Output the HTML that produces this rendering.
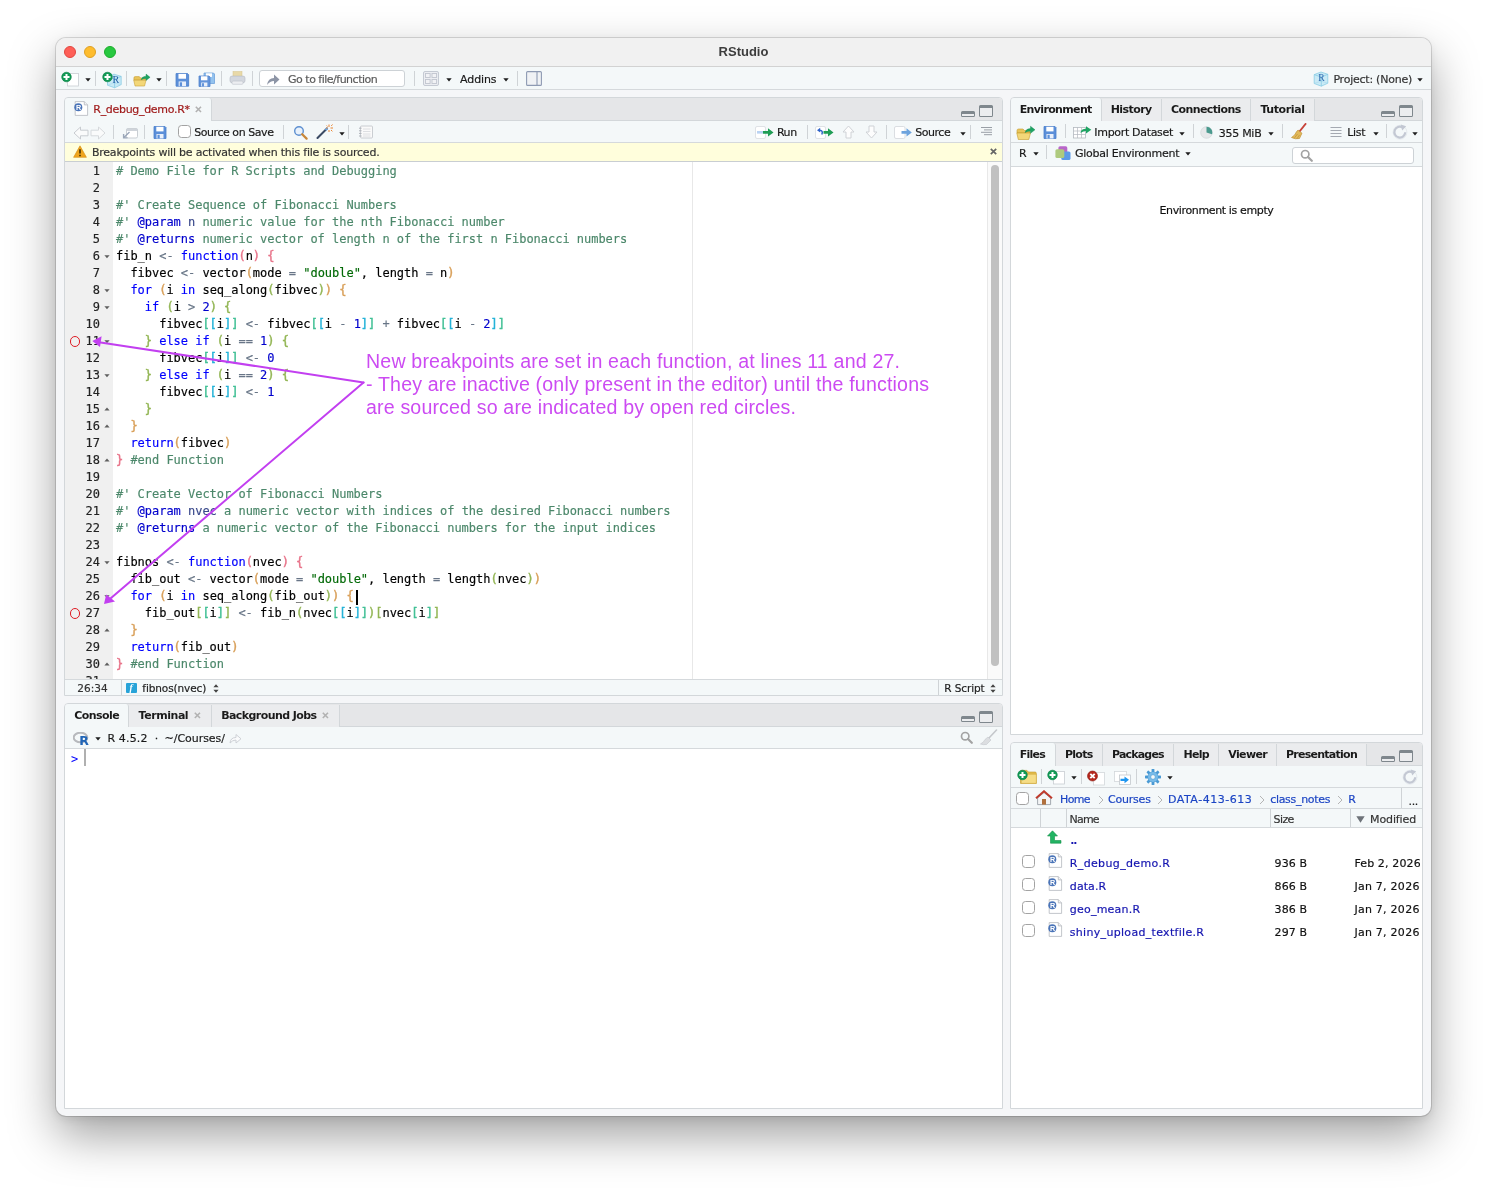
<!DOCTYPE html>
<html lang="en"><head><meta charset="utf-8"><title>RStudio</title>
<style>
html,body{margin:0;padding:0;background:#fff}
body{width:1487px;height:1190px;position:relative;overflow:hidden;font-family:"DejaVu Sans","Liberation Sans",sans-serif;font-size:11px;color:#000;line-height:1}
div,span,i,svg{position:absolute;box-sizing:border-box;white-space:pre}
i{display:block;font-style:normal}
#win{left:56px;top:38px;width:1375px;height:1078px;border-radius:10px;background:#f5f6f8;box-shadow:0 0 0 1px rgba(0,0,0,.13),0 20px 47px rgba(0,0,0,.37),0 3px 8px rgba(0,0,0,.08)}
#title{left:56px;top:38px;width:1375px;height:29px;background:#f1f1f1;border-radius:10px 10px 0 0;border-bottom:1px solid #d2d2d2}
#title .ttl{font-weight:700;left:0;width:1375px;text-align:center;top:7px;font-size:13px;color:#3d3d3d;font-family:"Liberation Sans",sans-serif}
.tl{top:8px;width:12px;height:12px;border-radius:50%}
#tbar{left:56px;top:67px;width:1375px;height:23px;background:#f4f8f9;border-bottom:1px solid #d5d9dc;overflow:hidden}
.pg{width:1487px;height:1190px}
#title,#tbar,.pane,body>svg{will-change:transform}
.pane{background:#fff;border:1px solid #d3d7da;border-radius:4px 4px 0 0;overflow:hidden}
.tabs{height:23px;background:#e5e6e8;border-bottom:1px solid #d3d7da}
.tab{height:22px;border-right:1px solid #d3d7da;background:#ebecee}
.tab.on{background:#f4f8f9;height:23px;border-radius:3px 3px 0 0}
.bar{height:22px;background:#f4f8f9;border-bottom:1px solid #d5d9dc}
.sep{width:1px;background:#cfd3d6}
.ln{left:0;height:17px;line-height:17px;font-family:"DejaVu Sans Mono","Liberation Mono",monospace;font-size:12px;letter-spacing:-0.0246px;color:#000}
.gn{left:0;width:48px;height:17px;line-height:17px;font-family:"DejaVu Sans Mono","Liberation Mono",monospace;font-size:12px;letter-spacing:-0.0246px;color:#222}
.gn span{right:13px;top:0}
.ln span{position:static}
.ln,.gn{-webkit-text-stroke:.16px}
.r{-webkit-text-stroke:.42px}
.c{color:#4c886b}.k{color:#0000ff}.s{color:#036a07}.n{color:#0000cd}.o{color:#687687}.t{color:#0000cd}.pv{color:#3b4a8c}
.bp{left:4.8px;top:3.3px;width:10.4px;height:10.4px;border:1.6px solid #df1c24;border-radius:50%}
.mm{width:14.2px;height:6.2px;border:1.2px solid #7f878d;border-top-width:3px;border-radius:1.5px;background:#ecedef}
.mx{width:14px;height:12px;border:1.3px solid #7f878d;border-top-width:3px;border-radius:1.5px;background:#ecedef}
.cb{width:13px;height:13px;border:1px solid #a3a3a3;border-radius:3.5px;background:#fff}
.x{color:#9b9b9b;font-weight:700;font-size:12px}
</style></head><body>
<div id="win"></div>
<div id="title"><i class="tl" style="left:8px;background:#fe5f57;border:.5px solid #e2463f"></i><i class="tl" style="left:28px;background:#febc2e;border:.5px solid #dfa023"></i><i class="tl" style="left:48px;background:#28c840;border:.5px solid #1dad2b"></i><span class="ttl">RStudio</span></div>
<div id="tbar"><div class="pg" style="left:-56px;top:-67px">
<svg style="left:61.4px;top:71.1px" width="18" height="16" viewBox="0 0 18 16"><rect x="6.5" y="2.5" width="11" height="12.5" fill="#fff" stroke="#c9cdd2" stroke-width=".8"/><circle cx="5.5" cy="6" r="4.8" fill="#119a55" stroke="#0c7f45" stroke-width=".6"/><path d="M2.5 6h6M5.5 3v6" stroke="#fff" stroke-width="2" fill="none"/></svg><svg style="left:85.4px;top:78px" width="6" height="4" viewBox="0 0 6 4"><path d="M.3 .2H5.7L3 3.4Z" fill="#1e1e1e"/></svg><i class="sep" style="left:95px;top:71px;height:15px"></i><svg style="left:101.5px;top:71px" width="20" height="18" viewBox="0 0 20 18"><path d="M5.5 5.8 L12 3.2 L19.2 5.4 V13.6 L12.6 16.8 L5.5 14.2Z" fill="#c9eaf6" stroke="#7fc8e3" stroke-width=".7"/><path d="M12 3.2V11.8L5.5 14.2M12 11.8L19.2 13.6" stroke="#a5d9ec" stroke-width=".6" fill="none"/><path d="M5.5 5.8L12.6 8.2L19.2 5.4M12.6 8.2V16.8" stroke="#7fc8e3" stroke-width=".7" fill="none"/><text x="10.4" y="12.2" font-family="Liberation Serif,serif" font-size="10" fill="#2461a8">R</text><circle cx="5.5" cy="6" r="4.8" fill="#119a55" stroke="#0c7f45" stroke-width=".6"/><path d="M2.5 6h6M5.5 3v6" stroke="#fff" stroke-width="2" fill="none"/></svg><i class="sep" style="left:125.8px;top:71px;height:15px"></i><svg style="left:132.6px;top:73px" width="18" height="14.4" viewBox="0 0 20 16"><path d="M1 5.5 Q1 4 2.5 4 H7 L8.5 5.5 H14 V8 H1Z" fill="#e9c55a" stroke="#c49b2e" stroke-width=".6"/><path d="M0.8 8 H14.5 L12.8 14.5 H2.3Z" fill="#f3d778" stroke="#c49b2e" stroke-width=".6"/><path d="M9 7.5 Q10 3.5 14.5 3.5 V1.2 L19 4.8 L14.5 8.3 V6 Q11.5 6 9 7.5Z" fill="#1ea463" stroke="#14874e" stroke-width=".4"/></svg><svg style="left:156.4px;top:78px" width="6" height="4" viewBox="0 0 6 4"><path d="M.3 .2H5.7L3 3.4Z" fill="#1e1e1e"/></svg><i class="sep" style="left:166px;top:71px;height:15px"></i><svg style="left:175.1px;top:71.6px" width="14.7" height="15.75" viewBox="0 0 14 15"><g opacity="1"><path d="M1 1.5 H12 L13 2.5 V13.5 H1Z" fill="#5b8fd9" stroke="#4a7fcc" stroke-width=".8"/><rect x="3.3" y="1.8" width="7.2" height="4.6" fill="#fff"/><rect x="3.5" y="9" width="7" height="4.5" fill="#e9f0fb"/><rect x="4.5" y="9.8" width="2.2" height="3.7" fill="#5b8fd9"/></g></svg><svg style="left:197.9px;top:71.5px" width="18" height="16" viewBox="0 0 18 16"><g opacity=".95"><path d="M6 1 H15.5 L16.5 2 V11.5 H6Z" fill="#8fc1ee" stroke="#5b95d6" stroke-width=".7"/><rect x="8" y="1.3" width="6" height="3.6" fill="#fff"/><path d="M1 4 H11 L12 5 V14.5 H1Z" fill="#5b8fd9" stroke="#4a7fcc" stroke-width=".8"/><rect x="3" y="4.3" width="6.4" height="4" fill="#fff"/><rect x="3.2" y="10.5" width="6.2" height="4" fill="#e9f0fb"/><rect x="4" y="11.2" width="2" height="3.3" fill="#5b8fd9"/></g></svg><i class="sep" style="left:221.1px;top:71px;height:15px"></i><svg style="left:229px;top:70.2px" width="17" height="16" viewBox="0 0 17 15"><rect x="4" y="1" width="9" height="6" fill="#e8d9a8" stroke="#d6c48c" stroke-width=".5"/><rect x="1" y="5.6" width="15" height="6.6" rx="2" fill="#d3d7de" stroke="#b3b8c2" stroke-width=".6"/><rect x="3" y="10.6" width="11" height="3.2" rx="1" fill="#eceef1" stroke="#b3b8c2" stroke-width=".5"/></svg><i class="sep" style="left:251.9px;top:71px;height:15px"></i><div style="left:259.4px;top:70.3px;width:146px;height:17px;background:#fff;border:1px solid #cdd2d6;border-radius:3px"></div><svg style="left:266px;top:72.5px" width="14" height="13" viewBox="0 0 14 13"><path d="M1 12 Q2 5 8 5 V1.5 L13.5 6.5 L8 11.5 V8 Q4 8 1 12Z" fill="#8d95a6"/></svg><span style="left:288.1px;top:74px;font-size:11px;-webkit-text-stroke:.18px;letter-spacing:-0.505px;color:#5a5a5a;">Go to file/function</span><i class="sep" style="left:414.2px;top:71px;height:15px"></i><svg style="left:423px;top:71.3px" width="16" height="15" viewBox="0 0 16 15"><g fill="#f1f2f5" stroke="#c0c5cf" stroke-width=".9"><rect x=".5" y=".5" width="15" height="14" rx="1.5" fill="#eceef2"/><rect x="2.5" y="2.5" width="4.6" height="4"/><rect x="9" y="2.5" width="4.6" height="4"/><rect x="2.5" y="8.5" width="4.6" height="4"/><rect x="9" y="8.5" width="4.6" height="4"/></g></svg><svg style="left:445.5px;top:78px" width="6" height="4" viewBox="0 0 6 4"><path d="M.3 .2H5.7L3 3.4Z" fill="#1e1e1e"/></svg><span style="left:460.1px;top:74px;font-size:11px;-webkit-text-stroke:.18px;letter-spacing:-0.127px;color:#1a1a1a;">Addins</span><svg style="left:503.4px;top:78px" width="6" height="4" viewBox="0 0 6 4"><path d="M.3 .2H5.7L3 3.4Z" fill="#1e1e1e"/></svg><i class="sep" style="left:517px;top:71px;height:15px"></i><svg style="left:525.8px;top:71.3px" width="16" height="15" viewBox="0 0 16 15"><rect x=".6" y=".6" width="14.8" height="13.8" rx="1" fill="#f0f2f5" stroke="#8e9ab3" stroke-width="1.1"/><path d="M11 1V14" stroke="#8e9ab3" stroke-width="1.1"/></svg><svg style="left:1312.8px;top:70.8px" width="16" height="16" viewBox="0 0 16 16"><path d="M1.2 3.6 L8 1 L14.8 3.3 V12.2 L8.3 15.2 L1.2 12.5Z" fill="#c9eaf6" stroke="#7fc8e3" stroke-width=".7"/><path d="M8 1V10.2L1.2 12.5M8 10.2L14.8 12.2" stroke="#a5d9ec" stroke-width=".6" fill="none"/><path d="M1.2 3.6L8.3 6L14.8 3.3M8.3 6V15.2" stroke="#7fc8e3" stroke-width=".7" fill="none"/><text x="5.2" y="10" font-family="Liberation Serif,serif" font-size="9.5" fill="#2b66ae">R</text></svg><span style="left:1333.4px;top:74px;font-size:11px;-webkit-text-stroke:.18px;letter-spacing:-0.235px;color:#333;">Project: (None)</span><svg style="left:1417px;top:78px" width="6" height="4" viewBox="0 0 6 4"><path d="M.3 .2H5.7L3 3.4Z" fill="#1e1e1e"/></svg>
</div></div>

<!-- SOURCE PANE -->
<div class="pane" style="left:64px;top:97px;width:939px;height:599px"><div class="pg" style="left:-65px;top:-98px">
 <div class="tabs" style="left:65px;top:98px;width:937px"></div>
 <div class="tab on" style="left:65px;top:98px;width:147px"></div>
<svg style="left:73px;top:100.4px" width="16" height="17" viewBox="0 0 16 17"><path d="M2.2 1.6 H11.3 L14.6 4.9 V15.4 H2.2Z" fill="#fff" stroke="#b4b8be" stroke-width=".8"/><path d="M11.3 1.6V4.9H14.6" fill="#f1f2f4" stroke="#b4b8be" stroke-width=".8"/><circle cx="5.3" cy="7.2" r="4" fill="#4a74b8"/><text x="3" y="9.8" font-family="Liberation Sans,sans-serif" font-weight="700" font-size="7.2" fill="#fff">R</text></svg><span style="left:93.3px;top:104px;font-size:11px;-webkit-text-stroke:.18px;letter-spacing:-0.306px;color:#a01b1b;">R_debug_demo.R*</span><svg style="left:194.5px;top:106px" width="7" height="7" viewBox="0 0 7 7"><path d="M.8 .8L6 6M6 .8L.8 6" stroke="#b2b2b2" stroke-width="1.6"/></svg><i class="mm" style="left:961px;top:110.6px"></i><i class="mx" style="left:979px;top:105px"></i>
 <div class="bar" style="left:65px;top:121px;width:937px"></div>
<svg style="left:73.2px;top:126px" width="16" height="14" viewBox="0 0 16 14"><path d="M1 7 L7.5 1 V4.2 H15 V9.8 H7.5 V13Z" fill="#fafbfb" stroke="#c8ccd0" stroke-width="1"/></svg><svg style="left:90.4px;top:126px" width="16" height="14" viewBox="0 0 16 14"><path d="M15 7 L8.5 1 V4.2 H1 V9.8 H8.5 V13Z" fill="#fafbfb" stroke="#d6d9dc" stroke-width="1"/></svg><i class="sep" style="left:113px;top:125px;height:14px"></i><svg style="left:121.6px;top:126px" width="16" height="13" viewBox="0 0 16 13"><rect x="4.5" y="2.5" width="11" height="9.5" rx="1.5" fill="#fff" stroke="#c3c8ce" stroke-width=".9"/><rect x="4.5" y="2.5" width="11" height="2.6" rx="1" fill="#cfd4da"/><path d="M7.5 6 L2 11.5 M1.6 8 V11.9 H5.5" stroke="#9aa6b8" stroke-width="1.4" fill="none"/></svg><i class="sep" style="left:143.9px;top:125px;height:14px"></i><svg style="left:153.2px;top:125.1px" width="14" height="15" viewBox="0 0 14 15"><g opacity="1"><path d="M1 1.5 H12 L13 2.5 V13.5 H1Z" fill="#5b8fd9" stroke="#4a7fcc" stroke-width=".8"/><rect x="3.3" y="1.8" width="7.2" height="4.6" fill="#fff"/><rect x="3.5" y="9" width="7" height="4.5" fill="#e9f0fb"/><rect x="4.5" y="9.8" width="2.2" height="3.7" fill="#5b8fd9"/></g></svg><i class="cb" style="left:178px;top:125.2px;width:12.6px;height:12.6px"></i><span style="left:194.2px;top:127px;font-size:11px;-webkit-text-stroke:.18px;letter-spacing:-0.442px;color:#1a1a1a;">Source on Save</span><i class="sep" style="left:283.1px;top:125px;height:14px"></i><svg style="left:293px;top:124.5px" width="15" height="15" viewBox="0 0 15 15"><circle cx="6" cy="6" r="4.3" fill="#e8f1fb" stroke="#5d8fd0" stroke-width="1.4"/><path d="M9.2 9.2 L13.6 13.6" stroke="#c9873a" stroke-width="2.2" stroke-linecap="round"/></svg><svg style="left:316.2px;top:124px" width="18" height="15" viewBox="0 0 18 15"><path d="M1.5 14 L11 4.5" stroke="#3b4a63" stroke-width="2" stroke-linecap="round"/><path d="M9.5 6 L11.5 4" stroke="#6aa7e8" stroke-width="2.2"/><g stroke="#e9822d" stroke-width="1"><path d="M13 0.5V3M13 6V8M10 4H11.5M14.5 4H17M15.2 1.8L16.6 .6M15 6L16.4 7.3M10.6 1.6L11.5 2.4"/></g></svg><svg style="left:338.5px;top:131.9px" width="6" height="4" viewBox="0 0 6 4"><path d="M.3 .2H5.7L3 3.4Z" fill="#1e1e1e"/></svg><i class="sep" style="left:348px;top:125px;height:14px"></i><svg style="left:357.8px;top:125px" width="15" height="14" viewBox="0 0 15 14"><rect x="2.5" y="1" width="12" height="12" rx="1" fill="#fafafa" stroke="#c4c8cd" stroke-width=".9"/><path d="M5 4H12.5M5 6.5H12.5M5 9H12.5M5 11H12.5" stroke="#d5d8dc" stroke-width=".8"/><path d="M1 3.2H3.6M1 5.8H3.6M1 8.4H3.6M1 11H3.6" stroke="#aeb3ba" stroke-width="1"/></svg><svg style="left:755.4px;top:125.5px" width="19" height="13" viewBox="0 0 19 13"><rect x=".5" y=".5" width="10" height="12" rx="1.5" fill="#fff" stroke="#d8dbdf" stroke-width=".8"/><rect x="2" y="5" width="6" height="2.6" fill="#b9d3f3"/><path d="M8 5 H13 V2.3 L18.5 6.4 L13 10.5 V7.8 H8Z" fill="#1f9d55"/></svg><span style="left:776.9px;top:127px;font-size:11px;-webkit-text-stroke:.18px;letter-spacing:-0.431px;color:#1a1a1a;">Run</span><i class="sep" style="left:807px;top:125px;height:14px"></i><svg style="left:815.4px;top:125.5px" width="19" height="13" viewBox="0 0 19 13"><rect x=".5" y=".5" width="10" height="12" rx="1.5" fill="#fff" stroke="#d8dbdf" stroke-width=".8"/><path d="M6.8 8.5 Q8.5 4.5 4.5 4.2" stroke="#2f63c9" stroke-width="1.5" fill="none"/><path d="M5.2 1.8 L2 4.2 L5.2 6.6Z" fill="#2f63c9"/><path d="M8.5 5 H13 V2.3 L18.5 6.4 L13 10.5 V7.8 H8.5Z" fill="#1f9d55"/></svg><svg style="left:841.5px;top:125px" width="13" height="14" viewBox="0 0 13 14"><path d="M6.5 1 L12 7 H9 V13 H4 V7 H1Z" fill="#fdfdfd" stroke="#cfd2d6" stroke-width="1"/></svg><svg style="left:865.3px;top:125px" width="13" height="14" viewBox="0 0 13 14"><path d="M6.5 13 L12 7 H9 V1 H4 V7 H1Z" fill="#fdfdfd" stroke="#cfd2d6" stroke-width="1"/></svg><i class="sep" style="left:885.9px;top:125px;height:14px"></i><svg style="left:894.3px;top:125.5px" width="18" height="13" viewBox="0 0 18 13"><rect x=".5" y=".5" width="10.5" height="12" rx="1.5" fill="#fff" stroke="#d3d6da" stroke-width=".8"/><path d="M7.5 5 H12.5 V2.3 L17.8 6.4 L12.5 10.5 V7.8 H7.5Z" fill="#6da3dd"/></svg><span style="left:915.2px;top:127px;font-size:11px;-webkit-text-stroke:.18px;letter-spacing:-0.447px;color:#1a1a1a;">Source</span><svg style="left:960.4px;top:131.9px" width="6" height="4" viewBox="0 0 6 4"><path d="M.3 .2H5.7L3 3.4Z" fill="#1e1e1e"/></svg><i class="sep" style="left:970.1px;top:125px;height:14px"></i><svg style="left:981px;top:126.8px" width="12" height="9" viewBox="0 0 12 9"><path d="M0 .5H11M3 2.9H11M0 5.3H11M3 7.7H11" stroke="#8f949c" stroke-width=".9"/></svg>
 <div style="left:65px;top:143px;width:937px;height:19px;background:#fffedc;border-bottom:1px solid #c9ced2"></div>
<svg style="left:73px;top:145px" width="14" height="13" viewBox="0 0 14 13"><path d="M7 .8 L13.4 12.3 H.6Z" fill="#f0a51d" stroke="#d18a0c" stroke-width=".6"/><path d="M7 4.2V8.6M7 9.8V11.2" stroke="#3a2a00" stroke-width="1.5"/></svg><span style="left:91.9px;top:147px;font-size:11px;-webkit-text-stroke:.18px;letter-spacing:-0.207px;color:#333;">Breakpoints will be activated when this file is sourced.</span><svg style="left:990.2px;top:148.4px" width="7" height="7" viewBox="0 0 7 7"><path d="M.8 .8L6.2 6.2M6.2 .8L.8 6.2" stroke="#666" stroke-width="1.7"/></svg>
 <div style="left:65px;top:162px;width:937px;height:517px;background:#fff;overflow:hidden">
  <div style="left:0;top:0;width:48px;height:517px;background:#f0f0f0"></div>
  <div style="left:627px;top:0;width:1px;height:517px;background:#e8e8e8"></div>
  <div style="left:0;top:0;width:48px;height:517px">
<div class="gn" style="top:1px"><span>1</span></div>
<div class="gn" style="top:18px"><span>2</span></div>
<div class="gn" style="top:35px"><span>3</span></div>
<div class="gn" style="top:52px"><span>4</span></div>
<div class="gn" style="top:69px"><span>5</span></div>
<div class="gn" style="top:86px"><span>6</span><svg style="left:39.2px;top:7px" width="6" height="4" viewBox="0 0 6 4"><path d="M.4 .3H5.6L3 3.3Z" fill="#5e5e5e"/></svg></div>
<div class="gn" style="top:103px"><span>7</span></div>
<div class="gn" style="top:120px"><span>8</span><svg style="left:39.2px;top:7px" width="6" height="4" viewBox="0 0 6 4"><path d="M.4 .3H5.6L3 3.3Z" fill="#5e5e5e"/></svg></div>
<div class="gn" style="top:137px"><span>9</span><svg style="left:39.2px;top:7px" width="6" height="4" viewBox="0 0 6 4"><path d="M.4 .3H5.6L3 3.3Z" fill="#5e5e5e"/></svg></div>
<div class="gn" style="top:154px"><span>10</span></div>
<div class="gn" style="top:171px"><i class="bp"></i><span>11</span><svg style="left:39.2px;top:7px" width="6" height="4" viewBox="0 0 6 4"><path d="M.4 .3H5.6L3 3.3Z" fill="#5e5e5e"/></svg></div>
<div class="gn" style="top:188px"><span>12</span></div>
<div class="gn" style="top:205px"><span>13</span><svg style="left:39.2px;top:7px" width="6" height="4" viewBox="0 0 6 4"><path d="M.4 .3H5.6L3 3.3Z" fill="#5e5e5e"/></svg></div>
<div class="gn" style="top:222px"><span>14</span></div>
<div class="gn" style="top:239px"><span>15</span><svg style="left:39.2px;top:6.2px" width="6" height="4" viewBox="0 0 6 4"><path d="M.4 3.5H5.6L3 .5Z" fill="#5e5e5e"/></svg></div>
<div class="gn" style="top:256px"><span>16</span><svg style="left:39.2px;top:6.2px" width="6" height="4" viewBox="0 0 6 4"><path d="M.4 3.5H5.6L3 .5Z" fill="#5e5e5e"/></svg></div>
<div class="gn" style="top:273px"><span>17</span></div>
<div class="gn" style="top:290px"><span>18</span><svg style="left:39.2px;top:6.2px" width="6" height="4" viewBox="0 0 6 4"><path d="M.4 3.5H5.6L3 .5Z" fill="#5e5e5e"/></svg></div>
<div class="gn" style="top:307px"><span>19</span></div>
<div class="gn" style="top:324px"><span>20</span></div>
<div class="gn" style="top:341px"><span>21</span></div>
<div class="gn" style="top:358px"><span>22</span></div>
<div class="gn" style="top:375px"><span>23</span></div>
<div class="gn" style="top:392px"><span>24</span><svg style="left:39.2px;top:7px" width="6" height="4" viewBox="0 0 6 4"><path d="M.4 .3H5.6L3 3.3Z" fill="#5e5e5e"/></svg></div>
<div class="gn" style="top:409px"><span>25</span></div>
<div class="gn" style="top:426px"><span>26</span><svg style="left:39.2px;top:7px" width="6" height="4" viewBox="0 0 6 4"><path d="M.4 .3H5.6L3 3.3Z" fill="#5e5e5e"/></svg></div>
<div class="gn" style="top:443px"><i class="bp"></i><span>27</span></div>
<div class="gn" style="top:460px"><span>28</span><svg style="left:39.2px;top:6.2px" width="6" height="4" viewBox="0 0 6 4"><path d="M.4 3.5H5.6L3 .5Z" fill="#5e5e5e"/></svg></div>
<div class="gn" style="top:477px"><span>29</span></div>
<div class="gn" style="top:494px"><span>30</span><svg style="left:39.2px;top:6.2px" width="6" height="4" viewBox="0 0 6 4"><path d="M.4 3.5H5.6L3 .5Z" fill="#5e5e5e"/></svg></div>
<div class="gn" style="top:511px"><span>31</span></div>

  </div>
  <div style="left:51px;top:0;width:880px;height:517px">
<div class="ln" style="top:1px"><span class="c"># Demo File for R Scripts and Debugging</span></div>
<div class="ln" style="top:18px"></div>
<div class="ln" style="top:35px"><span class="c">#&#x27; Create Sequence of Fibonacci Numbers</span></div>
<div class="ln" style="top:52px"><span class="c">#&#x27; </span><span class="t">@param</span><span class="pv"> n</span><span class="c"> numeric value for the nth Fibonacci number</span></div>
<div class="ln" style="top:69px"><span class="c">#&#x27; </span><span class="t">@returns</span><span class="c"> numeric vector of length n of the first n Fibonacci numbers</span></div>
<div class="ln" style="top:86px">fib_n <span class="o">&lt;-</span> <span class="k">function</span><span class="r" style="color:#e8748a">(</span>n<span class="r" style="color:#e8748a">)</span> <span class="r" style="color:#e8748a">{</span></div>
<div class="ln" style="top:103px">  fibvec <span class="o">&lt;-</span> vector<span class="r" style="color:#d9a05a">(</span>mode <span class="o">=</span> <span class="s">&quot;double&quot;</span>, length <span class="o">=</span> n<span class="r" style="color:#d9a05a">)</span></div>
<div class="ln" style="top:120px">  <span class="k">for</span> <span class="r" style="color:#d9a05a">(</span>i <span class="k">in</span> seq_along<span class="r" style="color:#93b655">(</span>fibvec<span class="r" style="color:#93b655">)</span><span class="r" style="color:#d9a05a">)</span> <span class="r" style="color:#d9a05a">{</span></div>
<div class="ln" style="top:137px">    <span class="k">if</span> <span class="r" style="color:#93b655">(</span>i <span class="o">&gt;</span> <span class="n">2</span><span class="r" style="color:#93b655">)</span> <span class="r" style="color:#93b655">{</span></div>
<div class="ln" style="top:154px">      fibvec<span class="r" style="color:#42c096">[</span><span class="r" style="color:#25b3d8">[</span>i<span class="r" style="color:#25b3d8">]</span><span class="r" style="color:#42c096">]</span> <span class="o">&lt;-</span> fibvec<span class="r" style="color:#42c096">[</span><span class="r" style="color:#25b3d8">[</span>i <span class="o">-</span> <span class="n">1</span><span class="r" style="color:#25b3d8">]</span><span class="r" style="color:#42c096">]</span> <span class="o">+</span> fibvec<span class="r" style="color:#42c096">[</span><span class="r" style="color:#25b3d8">[</span>i <span class="o">-</span> <span class="n">2</span><span class="r" style="color:#25b3d8">]</span><span class="r" style="color:#42c096">]</span></div>
<div class="ln" style="top:171px">    <span class="r" style="color:#93b655">}</span> <span class="k">else</span> <span class="k">if</span> <span class="r" style="color:#93b655">(</span>i <span class="o">==</span> <span class="n">1</span><span class="r" style="color:#93b655">)</span> <span class="r" style="color:#93b655">{</span></div>
<div class="ln" style="top:188px">      fibvec<span class="r" style="color:#42c096">[</span><span class="r" style="color:#25b3d8">[</span>i<span class="r" style="color:#25b3d8">]</span><span class="r" style="color:#42c096">]</span> <span class="o">&lt;-</span> <span class="n">0</span></div>
<div class="ln" style="top:205px">    <span class="r" style="color:#93b655">}</span> <span class="k">else</span> <span class="k">if</span> <span class="r" style="color:#93b655">(</span>i <span class="o">==</span> <span class="n">2</span><span class="r" style="color:#93b655">)</span> <span class="r" style="color:#93b655">{</span></div>
<div class="ln" style="top:222px">      fibvec<span class="r" style="color:#42c096">[</span><span class="r" style="color:#25b3d8">[</span>i<span class="r" style="color:#25b3d8">]</span><span class="r" style="color:#42c096">]</span> <span class="o">&lt;-</span> <span class="n">1</span></div>
<div class="ln" style="top:239px">    <span class="r" style="color:#93b655">}</span></div>
<div class="ln" style="top:256px">  <span class="r" style="color:#d9a05a">}</span></div>
<div class="ln" style="top:273px">  <span class="k">return</span><span class="r" style="color:#d9a05a">(</span>fibvec<span class="r" style="color:#d9a05a">)</span></div>
<div class="ln" style="top:290px"><span class="r" style="color:#e8748a">}</span> <span class="c">#end Function</span></div>
<div class="ln" style="top:307px"></div>
<div class="ln" style="top:324px"><span class="c">#&#x27; Create Vector of Fibonacci Numbers</span></div>
<div class="ln" style="top:341px"><span class="c">#&#x27; </span><span class="t">@param</span><span class="pv"> nvec</span><span class="c"> a numeric vector with indices of the desired Fibonacci numbers</span></div>
<div class="ln" style="top:358px"><span class="c">#&#x27; </span><span class="t">@returns</span><span class="c"> a numeric vector of the Fibonacci numbers for the input indices</span></div>
<div class="ln" style="top:375px"></div>
<div class="ln" style="top:392px">fibnos <span class="o">&lt;-</span> <span class="k">function</span><span class="r" style="color:#e8748a">(</span>nvec<span class="r" style="color:#e8748a">)</span> <span class="r" style="color:#e8748a">{</span></div>
<div class="ln" style="top:409px">  fib_out <span class="o">&lt;-</span> vector<span class="r" style="color:#d9a05a">(</span>mode <span class="o">=</span> <span class="s">&quot;double&quot;</span>, length <span class="o">=</span> length<span class="r" style="color:#93b655">(</span>nvec<span class="r" style="color:#93b655">)</span><span class="r" style="color:#d9a05a">)</span></div>
<div class="ln" style="top:426px">  <span class="k">for</span> <span class="r" style="color:#d9a05a">(</span>i <span class="k">in</span> seq_along<span class="r" style="color:#93b655">(</span>fib_out<span class="r" style="color:#93b655">)</span><span class="r" style="color:#d9a05a">)</span> <span class="r" style="color:#d9a05a">{</span></div>
<div class="ln" style="top:443px">    fib_out<span class="r" style="color:#93b655">[</span><span class="r" style="color:#42c096">[</span>i<span class="r" style="color:#42c096">]</span><span class="r" style="color:#93b655">]</span> <span class="o">&lt;-</span> fib_n<span class="r" style="color:#93b655">(</span>nvec<span class="r" style="color:#42c096">[</span><span class="r" style="color:#25b3d8">[</span>i<span class="r" style="color:#25b3d8">]</span><span class="r" style="color:#42c096">]</span><span class="r" style="color:#93b655">)</span><span class="r" style="color:#93b655">[</span>nvec<span class="r" style="color:#42c096">[</span>i<span class="r" style="color:#42c096">]</span><span class="r" style="color:#93b655">]</span></div>
<div class="ln" style="top:460px">  <span class="r" style="color:#d9a05a">}</span></div>
<div class="ln" style="top:477px">  <span class="k">return</span><span class="r" style="color:#d9a05a">(</span>fib_out<span class="r" style="color:#d9a05a">)</span></div>
<div class="ln" style="top:494px"><span class="r" style="color:#e8748a">}</span> <span class="c">#end Function</span></div>
<div class="ln" style="top:511px"></div>

  </div>
  <div style="left:290.5px;top:427.5px;width:2px;height:15px;background:#000"></div>
  <div style="left:922px;top:0;width:15px;height:517px;background:#fafafa;border-left:1px solid #e8e8e8"></div>
  <div style="left:926px;top:3px;width:8px;height:501px;border-radius:4px;background:#c1c1c1"></div>
 </div>
 <div style="left:65px;top:679px;width:937px;height:16px;background:#f4f8f9;border-top:1px solid #d5d9dc"></div>
<span style="left:77.2px;top:683px;font-size:10.5px;-webkit-text-stroke:.18px;letter-spacing:0.067px;color:#333;">26:34</span><i class="sep" style="left:120.9px;top:680px;height:15px"></i><svg style="left:126.3px;top:683.2px" width="11" height="10" viewBox="0 0 11 10"><rect width="11" height="10" rx="1" fill="#27a3d8"/><text x="3.4" y="8" font-family="Liberation Serif,serif" font-style="italic" font-weight="700" font-size="9.5" fill="#fff">f</text></svg><span style="left:142.3px;top:683px;font-size:10.5px;-webkit-text-stroke:.18px;letter-spacing:-0.094px;color:#222;">fibnos(nvec)</span><svg style="left:213px;top:684.3px" width="6" height="9" viewBox="0 0 6 9"><path d="M3 0.3 L5.6 3.3 H.4Z M3 8.7 L5.6 5.7 H.4Z" fill="#444"/></svg><i class="sep" style="left:937.7px;top:680px;height:15px"></i><span style="left:944.3px;top:683px;font-size:10.5px;-webkit-text-stroke:.18px;letter-spacing:-0.099px;color:#222;">R Script</span><svg style="left:990.3px;top:684.3px" width="6" height="9" viewBox="0 0 6 9"><path d="M3 0.3 L5.6 3.3 H.4Z M3 8.7 L5.6 5.7 H.4Z" fill="#444"/></svg>
</div></div>

<!-- CONSOLE PANE -->
<div class="pane" style="left:64px;top:703px;width:939px;height:406px"><div class="pg" style="left:-65px;top:-704px">
 <div class="tabs" style="left:65px;top:704px;width:937px"></div>
<div class="tab on" style="left:65px;top:704px;width:64px"></div><div class="tab" style="left:129px;top:705px;width:83px"></div><div class="tab" style="left:212px;top:705px;width:128px"></div><span style="left:74.2px;top:710px;font-size:11px;font-weight:700;letter-spacing:-0.542px;color:#1a1a1a;">Console</span><span style="left:138.6px;top:710px;font-size:11px;font-weight:700;letter-spacing:-0.448px;color:#1a1a1a;">Terminal</span><svg style="left:194.3px;top:711.6px" width="7" height="7" viewBox="0 0 7 7"><path d="M.8 .8L6 6M6 .8L.8 6" stroke="#b2b2b2" stroke-width="1.6"/></svg><span style="left:221.2px;top:710px;font-size:11px;font-weight:700;letter-spacing:-0.569px;color:#1a1a1a;">Background Jobs</span><svg style="left:322.2px;top:711.6px" width="7" height="7" viewBox="0 0 7 7"><path d="M.8 .8L6 6M6 .8L.8 6" stroke="#b2b2b2" stroke-width="1.6"/></svg><i class="mm" style="left:961px;top:716.2px"></i><i class="mx" style="left:979px;top:710.6px"></i>
 <div class="bar" style="left:65px;top:727px;width:937px"></div>
<svg style="left:73px;top:731.5px" width="17" height="13" viewBox="0 0 17 13"><ellipse cx="7.5" cy="5.5" rx="6.8" ry="4.8" fill="none" stroke="#b7b9bd" stroke-width="2"/><text x="6.3" y="12.8" font-family="DejaVu Sans,sans-serif" font-weight="700" font-size="12.5" fill="#2165b6">R</text></svg><svg style="left:95.1px;top:737px" width="6" height="4" viewBox="0 0 6 4"><path d="M.3 .2H5.7L3 3.4Z" fill="#1e1e1e"/></svg><span style="left:107.4px;top:733px;font-size:11px;-webkit-text-stroke:.18px;letter-spacing:0.166px;color:#1a1a1a;">R 4.5.2</span><span style="left:154.8px;top:733px;font-size:11px;-webkit-text-stroke:.18px;color:#1a1a1a;">·</span><span style="left:164.6px;top:733px;font-size:11px;-webkit-text-stroke:.18px;letter-spacing:-0.047px;color:#1a1a1a;">~/Courses/</span><svg style="left:229px;top:732.5px" width="13" height="11" viewBox="0 0 13 11"><path d="M1 10 Q1.5 4.5 7 4.5 V1.5 L12 5.8 L7 10 V7 Q3.5 7 1 10Z" fill="#fafbfc" stroke="#c9cdd3" stroke-width=".9"/></svg><svg style="left:960px;top:731px" width="13" height="13" viewBox="0 0 13 13"><circle cx="5.2" cy="5.2" r="3.7" fill="none" stroke="#a3a3a3" stroke-width="1.7"/><path d="M8 8 L11.8 11.8" stroke="#a3a3a3" stroke-width="2.2" stroke-linecap="round"/></svg><svg style="left:978.5px;top:729px" width="19" height="17" viewBox="0 0 19 17"><path d="M17.5 1 L9.5 9.5" stroke="#c5c8cc" stroke-width="1.6" stroke-linecap="round"/><path d="M9 8 L12 11 L7.5 15.5 Q4 16 1.5 15 Q5 13 6 10.5Z" fill="#dcdee1" stroke="#c5c8cc" stroke-width=".6"/></svg><span style="left:71px;top:752px;font-family:'DejaVu Sans Mono','Liberation Mono',monospace;font-size:12px;line-height:14px;color:#0000ff">&gt;</span><div style="left:84.3px;top:749px;width:1.7px;height:17px;background:#b0b0b0"></div>
</div></div>

<!-- ENV PANE -->
<div class="pane" style="left:1010px;top:97px;width:413px;height:638px"><div class="pg" style="left:-1011px;top:-98px">
 <div class="tabs" style="left:1011px;top:98px;width:411px"></div>
<div class="tab on" style="left:1011px;top:98px;width:91px"></div><div class="tab" style="left:1102px;top:99px;width:60px"></div><div class="tab" style="left:1162px;top:99px;width:89px"></div><div class="tab" style="left:1251px;top:99px;width:64px"></div><span style="left:1019.7px;top:104px;font-size:11px;font-weight:700;letter-spacing:-0.648px;color:#1a1a1a;">Environment</span><span style="left:1110.7px;top:104px;font-size:11px;font-weight:700;letter-spacing:-0.562px;color:#1a1a1a;">History</span><span style="left:1171px;top:104px;font-size:11px;font-weight:700;letter-spacing:-0.595px;color:#1a1a1a;">Connections</span><span style="left:1260.4px;top:104px;font-size:11px;font-weight:700;letter-spacing:-0.393px;color:#1a1a1a;">Tutorial</span><i class="mm" style="left:1381px;top:110.6px"></i><i class="mx" style="left:1399px;top:105px"></i>
 <div class="bar" style="left:1011px;top:121px;width:411px"></div>
 <div class="bar" style="left:1011px;top:143px;width:411px;height:24px"></div>
<svg style="left:1016.4px;top:125px" width="20" height="16" viewBox="0 0 20 16"><path d="M1 5.5 Q1 4 2.5 4 H7 L8.5 5.5 H14 V8 H1Z" fill="#e9c55a" stroke="#c49b2e" stroke-width=".6"/><path d="M0.8 8 H14.5 L12.8 14.5 H2.3Z" fill="#f3d778" stroke="#c49b2e" stroke-width=".6"/><path d="M9 7.5 Q10 3.5 14.5 3.5 V1.2 L19 4.8 L14.5 8.3 V6 Q11.5 6 9 7.5Z" fill="#1ea463" stroke="#14874e" stroke-width=".4"/></svg><svg style="left:1043.2px;top:124.8px" width="14" height="15" viewBox="0 0 14 15"><g opacity="1"><path d="M1 1.5 H12 L13 2.5 V13.5 H1Z" fill="#5b8fd9" stroke="#4a7fcc" stroke-width=".8"/><rect x="3.3" y="1.8" width="7.2" height="4.6" fill="#fff"/><rect x="3.5" y="9" width="7" height="4.5" fill="#e9f0fb"/><rect x="4.5" y="9.8" width="2.2" height="3.7" fill="#5b8fd9"/></g></svg><i class="sep" style="left:1065.1px;top:124px;height:14px"></i><svg style="left:1072.7px;top:124.5px" width="19" height="14" viewBox="0 0 19 14"><rect x=".5" y="2.5" width="12" height="10.5" fill="#fff" stroke="#b3b8bf" stroke-width=".8"/><path d="M.5 6H12.5M.5 9.5H12.5M4.5 2.5V13M8.5 2.5V13" stroke="#b3b8bf" stroke-width=".7"/><path d="M7.5 8 Q8 3.8 13 3.8 V1.2 L18.3 4.8 L13 8.4 V6 Q10 6 7.5 8Z" fill="#1ea463"/></svg><span style="left:1094.3px;top:127px;font-size:11px;-webkit-text-stroke:.18px;letter-spacing:-0.314px;color:#1a1a1a;">Import Dataset</span><svg style="left:1179.4px;top:131.9px" width="6" height="4" viewBox="0 0 6 4"><path d="M.3 .2H5.7L3 3.4Z" fill="#1e1e1e"/></svg><i class="sep" style="left:1193.4px;top:124px;height:14px"></i><svg style="left:1200.3px;top:125.5px" width="13" height="13" viewBox="0 0 13 13"><circle cx="6.5" cy="6.5" r="5.8" fill="#e6e8ea" stroke="#cfd2d5" stroke-width=".6"/><path d="M6.5 6.5 L6.5 .7 A5.8 5.8 0 0 1 12 8.2Z" fill="#4a9a8e"/></svg><span style="left:1218.8px;top:128px;font-size:11px;-webkit-text-stroke:.18px;letter-spacing:-0.285px;color:#1a1a1a;">355 MiB</span><svg style="left:1268.2px;top:131.9px" width="6" height="4" viewBox="0 0 6 4"><path d="M.3 .2H5.7L3 3.4Z" fill="#1e1e1e"/></svg><i class="sep" style="left:1281.8px;top:124px;height:14px"></i><svg style="left:1289.5px;top:123px" width="17" height="17" viewBox="0 0 17 17"><path d="M15.5 1 L9.5 8.5" stroke="#c7443a" stroke-width="2" stroke-linecap="round"/><path d="M8 7 L12 10.2 L9.5 15.5 Q5 16.5 1.5 14.5 Q5.5 12 6.3 9Z" fill="#e2b95b" stroke="#b98b2d" stroke-width=".6"/><path d="M4.5 14.8L7.5 11M7 15.6L9.5 12" stroke="#b98b2d" stroke-width=".6"/></svg><svg style="left:1329.5px;top:127px" width="12" height="11" viewBox="0 0 12 11"><path d="M.5 .5H11.5M.5 3.5H11.5M.5 6.5H11.5M.5 9.5H11.5" stroke="#a4a9b1" stroke-width="1"/></svg><span style="left:1347.2px;top:127px;font-size:11px;-webkit-text-stroke:.18px;letter-spacing:-0.309px;color:#1a1a1a;">List</span><svg style="left:1372.7px;top:131.9px" width="6" height="4" viewBox="0 0 6 4"><path d="M.3 .2H5.7L3 3.4Z" fill="#1e1e1e"/></svg><i class="sep" style="left:1386px;top:124px;height:14px"></i><svg style="left:1392px;top:124px" width="16" height="16" viewBox="0 0 16 16"><path d="M13.2 8.2 A5.4 5.4 0 1 1 10.6 3.5" fill="none" stroke="#c3c8d3" stroke-width="2.2"/><path d="M8.8 0.6 L14.2 2.2 L10.2 6.4Z" fill="#c3c8d3"/><circle cx="8" cy="8.2" r="6.9" fill="none" stroke="#c3c8d3" stroke-width=".5" opacity=".6"/></svg><svg style="left:1412.3px;top:131.9px" width="6" height="4" viewBox="0 0 6 4"><path d="M.3 .2H5.7L3 3.4Z" fill="#1e1e1e"/></svg><span style="left:1019px;top:148px;font-size:11px;-webkit-text-stroke:.18px;letter-spacing:-0.156px;color:#1a1a1a;">R</span><svg style="left:1032.5px;top:152.1px" width="6" height="4" viewBox="0 0 6 4"><path d="M.3 .2H5.7L3 3.4Z" fill="#1e1e1e"/></svg><i class="sep" style="left:1045.9px;top:145px;height:14px"></i><svg style="left:1054.6px;top:145.8px" width="16" height="15" viewBox="0 0 16 15"><rect x="3.4" y=".3" width="8.9" height="8.6" rx="1.6" fill="#b866c9"/><rect x="6.3" y="5.4" width="9.2" height="8.6" rx="1.6" fill="#5b9ae8"/><rect x=".4" y="3.2" width="8.9" height="8.9" rx="1.6" fill="#aeca7e"/></svg><span style="left:1074.9px;top:148px;font-size:11px;-webkit-text-stroke:.18px;letter-spacing:-0.240px;color:#1a1a1a;">Global Environment</span><svg style="left:1185.3px;top:152.1px" width="6" height="4" viewBox="0 0 6 4"><path d="M.3 .2H5.7L3 3.4Z" fill="#1e1e1e"/></svg><div style="left:1292.3px;top:146.5px;width:121.5px;height:17px;background:#fff;border:1px solid #cdd2d6;border-radius:3px"></div><svg style="left:1299.5px;top:149px" width="13" height="13" viewBox="0 0 13 13"><circle cx="5.2" cy="5.2" r="3.7" fill="none" stroke="#a3a3a3" stroke-width="1.7"/><path d="M8 8 L11.8 11.8" stroke="#a3a3a3" stroke-width="2.2" stroke-linecap="round"/></svg><span style="left:1159.5px;top:205px;font-size:11px;-webkit-text-stroke:.18px;letter-spacing:-0.366px;color:#111;">Environment is empty</span>
</div></div>

<!-- FILES PANE -->
<div class="pane" style="left:1010px;top:742px;width:413px;height:367px"><div class="pg" style="left:-1011px;top:-743px">
 <div class="tabs" style="left:1011px;top:743px;width:411px"></div>
<div class="tab on" style="left:1011px;top:743px;width:45px"></div><div class="tab" style="left:1056px;top:744px;width:47px"></div><div class="tab" style="left:1103px;top:744px;width:71px"></div><div class="tab" style="left:1174px;top:744px;width:45px"></div><div class="tab" style="left:1219px;top:744px;width:58px"></div><div class="tab" style="left:1277px;top:744px;width:90px"></div><span style="left:1019.7px;top:749px;font-size:11px;font-weight:700;letter-spacing:-0.716px;color:#1a1a1a;">Files</span><span style="left:1064.9px;top:749px;font-size:11px;font-weight:700;letter-spacing:-0.681px;color:#1a1a1a;">Plots</span><span style="left:1112px;top:749px;font-size:11px;font-weight:700;letter-spacing:-0.818px;color:#1a1a1a;">Packages</span><span style="left:1183.4px;top:749px;font-size:11px;font-weight:700;letter-spacing:-0.678px;color:#1a1a1a;">Help</span><span style="left:1228.3px;top:749px;font-size:11px;font-weight:700;letter-spacing:-0.652px;color:#1a1a1a;">Viewer</span><span style="left:1286px;top:749px;font-size:11px;font-weight:700;letter-spacing:-0.741px;color:#1a1a1a;">Presentation</span><i class="mm" style="left:1381px;top:755.8px"></i><i class="mx" style="left:1399px;top:750px"></i>
 <div class="bar" style="left:1011px;top:766px;width:411px"></div>
 <div class="bar" style="left:1011px;top:788px;width:411px;height:21px"></div>
 <div class="bar" style="left:1011px;top:809px;width:411px;height:19px"></div>
<svg style="left:1016.5px;top:769px" width="20" height="16" viewBox="0 0 20 16"><path d="M3.5 2.6 Q3.5 1.4 4.7 1.4 H10 L11.4 3 H18 Q19.3 3 19.3 4.2 V14.4 H3.5Z" fill="#e3bb4a" stroke="#c49b2e" stroke-width=".6"/><path d="M4.2 5.2 H19.3 V14.4 H4.2Z" fill="#f5dc85" stroke="#c9a135" stroke-width=".5"/><circle cx="5.5" cy="6" r="4.8" fill="#119a55" stroke="#0c7f45" stroke-width=".6"/><path d="M2.5 6h6M5.5 3v6" stroke="#fff" stroke-width="2" fill="none"/></svg><i class="sep" style="left:1041.1px;top:769px;height:15px"></i><svg style="left:1047.4px;top:768.8px" width="18" height="16" viewBox="0 0 18 16"><rect x="6.5" y="2.5" width="11" height="12.5" fill="#fff" stroke="#c9cdd2" stroke-width=".8"/><circle cx="5.5" cy="6" r="4.8" fill="#119a55" stroke="#0c7f45" stroke-width=".6"/><path d="M2.5 6h6M5.5 3v6" stroke="#fff" stroke-width="2" fill="none"/></svg><svg style="left:1071.3px;top:776.1px" width="6" height="4" viewBox="0 0 6 4"><path d="M.3 .2H5.7L3 3.4Z" fill="#1e1e1e"/></svg><i class="sep" style="left:1081.4px;top:769px;height:15px"></i><svg style="left:1087px;top:769.5px" width="18" height="16" viewBox="0 0 18 16"><rect x="6.5" y="2.5" width="11" height="12.5" fill="#fff" stroke="#d3d6da" stroke-width=".8"/><circle cx="5.5" cy="6" r="5" fill="#b5271d" stroke="#8f1b13" stroke-width=".6"/><path d="M3.3 3.8L7.7 8.2M7.7 3.8L3.3 8.2" stroke="#fff" stroke-width="1.9"/></svg><svg style="left:1113.5px;top:771px" width="17" height="14" viewBox="0 0 17 14"><rect x=".5" y=".5" width="12" height="10" fill="#fff" stroke="#d3d6da" stroke-width=".8"/><rect x="5.5" y="4" width="11" height="9.5" fill="#fff" stroke="#c3c7cc" stroke-width=".8"/><path d="M6.5 7.7 H10.5 V5.4 L15 8.8 L10.5 12.2 V9.9 H6.5Z" fill="#1e96f0"/></svg><i class="sep" style="left:1136.4px;top:769px;height:15px"></i><svg style="left:1145px;top:768.5px" width="16" height="16" viewBox="0 0 16 16"><rect x="6.6" y="0" width="2.8" height="4" rx=".6" fill="#4a9ad4" transform="rotate(0 8 8)"/><rect x="6.6" y="0" width="2.8" height="4" rx=".6" fill="#4a9ad4" transform="rotate(45 8 8)"/><rect x="6.6" y="0" width="2.8" height="4" rx=".6" fill="#4a9ad4" transform="rotate(90 8 8)"/><rect x="6.6" y="0" width="2.8" height="4" rx=".6" fill="#4a9ad4" transform="rotate(135 8 8)"/><rect x="6.6" y="0" width="2.8" height="4" rx=".6" fill="#4a9ad4" transform="rotate(180 8 8)"/><rect x="6.6" y="0" width="2.8" height="4" rx=".6" fill="#4a9ad4" transform="rotate(225 8 8)"/><rect x="6.6" y="0" width="2.8" height="4" rx=".6" fill="#4a9ad4" transform="rotate(270 8 8)"/><rect x="6.6" y="0" width="2.8" height="4" rx=".6" fill="#4a9ad4" transform="rotate(315 8 8)"/><circle cx="8" cy="8" r="5.4" fill="#4a9ad4"/><circle cx="8" cy="8" r="5" fill="#79bbe8"/><circle cx="8" cy="8" r="2.3" fill="#f4f8f9" stroke="#4a9ad4" stroke-width=".6"/></svg><svg style="left:1167.3px;top:776.1px" width="6" height="4" viewBox="0 0 6 4"><path d="M.3 .2H5.7L3 3.4Z" fill="#1e1e1e"/></svg><svg style="left:1402px;top:768.5px" width="16" height="16" viewBox="0 0 16 16"><path d="M13.2 8.2 A5.4 5.4 0 1 1 10.6 3.5" fill="none" stroke="#c3c8d3" stroke-width="2.2"/><path d="M8.8 0.6 L14.2 2.2 L10.2 6.4Z" fill="#c3c8d3"/><circle cx="8" cy="8.2" r="6.9" fill="none" stroke="#c3c8d3" stroke-width=".5" opacity=".6"/></svg><i class="cb" style="left:1015.7px;top:792.2px"></i><svg style="left:1035px;top:789.7px" width="18" height="16" viewBox="0 0 18 16"><path d="M2.6 8 V14.6 H15.6 V8 L9 2.5Z" fill="#f4f5f6" stroke="#9aa0a8" stroke-width=".9"/><rect x="7" y="9" width="4" height="5.6" fill="#b0703c"/><path d="M1 8.3 L9 1.2 L17 8.3" fill="none" stroke="#c0392b" stroke-width="1.9" stroke-linejoin="miter"/></svg><span style="left:1060px;top:794px;font-size:11px;-webkit-text-stroke:.18px;letter-spacing:-0.621px;color:#1c45c4;">Home</span><svg style="left:1097.5px;top:794.5px" width="6" height="10" viewBox="0 0 6 10"><path d="M1 1L5 5L1 9" fill="none" stroke="#b5b5b5" stroke-width="1"/></svg><span style="left:1108px;top:794px;font-size:11px;-webkit-text-stroke:.18px;letter-spacing:-0.206px;color:#1c45c4;">Courses</span><svg style="left:1157px;top:794.5px" width="6" height="10" viewBox="0 0 6 10"><path d="M1 1L5 5L1 9" fill="none" stroke="#b5b5b5" stroke-width="1"/></svg><span style="left:1168px;top:794px;font-size:11px;-webkit-text-stroke:.18px;letter-spacing:0.514px;color:#1c45c4;">DATA-413-613</span><svg style="left:1258.5px;top:794.5px" width="6" height="10" viewBox="0 0 6 10"><path d="M1 1L5 5L1 9" fill="none" stroke="#b5b5b5" stroke-width="1"/></svg><span style="left:1270.2px;top:794px;font-size:11px;-webkit-text-stroke:.18px;letter-spacing:-0.303px;color:#1c45c4;">class_notes</span><svg style="left:1337px;top:794.5px" width="6" height="10" viewBox="0 0 6 10"><path d="M1 1L5 5L1 9" fill="none" stroke="#b5b5b5" stroke-width="1"/></svg><span style="left:1348.2px;top:794px;font-size:11px;-webkit-text-stroke:.18px;letter-spacing:-0.156px;color:#1c45c4;">R</span><i class="sep" style="left:1401.4px;top:788px;height:20px"></i><span style="left:1408.5px;top:796px;font-size:11px;-webkit-text-stroke:.18px;letter-spacing:-0.333px;color:#222;">...</span><i class="sep" style="left:1039.8px;top:809px;height:18px"></i><i class="sep" style="left:1066px;top:809px;height:18px"></i><span style="left:1069.4px;top:814px;font-size:11px;-webkit-text-stroke:.18px;letter-spacing:-0.738px;color:#333;">Name</span><i class="sep" style="left:1269.7px;top:809px;height:18px"></i><span style="left:1273.5px;top:814px;font-size:11px;-webkit-text-stroke:.18px;letter-spacing:-0.573px;color:#333;">Size</span><i class="sep" style="left:1350px;top:809px;height:18px"></i><svg style="left:1356px;top:815.5px" width="9" height="7" viewBox="0 0 9 7"><path d="M.3 .3 H8.7 L4.5 6.7Z" fill="#6e7379"/></svg><span style="left:1370.1px;top:814px;font-size:11px;-webkit-text-stroke:.18px;letter-spacing:-0.132px;color:#333;">Modified</span><svg style="left:1047.3px;top:830.2px" width="15" height="14" viewBox="0 0 15 14"><path d="M5.5 .8 L10.5 6 H7.5 V10.5 H14 V13.2 H3.5 V6 H.5Z" fill="#22b463" stroke="#17904c" stroke-width=".6"/></svg><span style="left:1070.2px;top:835px;font-size:11px;font-weight:700;letter-spacing:-1.130px;color:#1414b0;">..</span><i class="cb" style="left:1022.1px;top:855.4px"></i><svg style="left:1046.8px;top:852.3px" width="16" height="17" viewBox="0 0 16 17"><path d="M2.2 1.6 H11.3 L14.6 4.9 V15.4 H2.2Z" fill="#fff" stroke="#b4b8be" stroke-width=".8"/><path d="M11.3 1.6V4.9H14.6" fill="#f1f2f4" stroke="#b4b8be" stroke-width=".8"/><circle cx="5.3" cy="7.2" r="4" fill="#4a74b8"/><text x="3" y="9.8" font-family="Liberation Sans,sans-serif" font-weight="700" font-size="7.2" fill="#fff">R</text></svg><span style="left:1069.8px;top:858px;font-size:11px;-webkit-text-stroke:.18px;letter-spacing:0.358px;color:#1414b0;">R_debug_demo.R</span><span style="left:1274.5px;top:858px;font-size:11px;-webkit-text-stroke:.18px;letter-spacing:0.131px;color:#111;">936 B</span><div style="left:1351px;top:855px;width:69px;height:16px;overflow:hidden"><span style="left:3.4px;top:3px;font-size:11px;-webkit-text-stroke:.18px;letter-spacing:0.128px;color:#111;">Feb 2, 2026,</span></div><i class="cb" style="left:1022.1px;top:878.4px"></i><svg style="left:1046.8px;top:875.3px" width="16" height="17" viewBox="0 0 16 17"><path d="M2.2 1.6 H11.3 L14.6 4.9 V15.4 H2.2Z" fill="#fff" stroke="#b4b8be" stroke-width=".8"/><path d="M11.3 1.6V4.9H14.6" fill="#f1f2f4" stroke="#b4b8be" stroke-width=".8"/><circle cx="5.3" cy="7.2" r="4" fill="#4a74b8"/><text x="3" y="9.8" font-family="Liberation Sans,sans-serif" font-weight="700" font-size="7.2" fill="#fff">R</text></svg><span style="left:1069.8px;top:881px;font-size:11px;-webkit-text-stroke:.18px;letter-spacing:0.096px;color:#1414b0;">data.R</span><span style="left:1274.5px;top:881px;font-size:11px;-webkit-text-stroke:.18px;letter-spacing:0.131px;color:#111;">866 B</span><div style="left:1351px;top:878px;width:69px;height:16px;overflow:hidden"><span style="left:3.4px;top:3px;font-size:11px;-webkit-text-stroke:.18px;letter-spacing:0.255px;color:#111;">Jan 7, 2026,</span></div><i class="cb" style="left:1022.1px;top:901.4px"></i><svg style="left:1046.8px;top:898.3px" width="16" height="17" viewBox="0 0 16 17"><path d="M2.2 1.6 H11.3 L14.6 4.9 V15.4 H2.2Z" fill="#fff" stroke="#b4b8be" stroke-width=".8"/><path d="M11.3 1.6V4.9H14.6" fill="#f1f2f4" stroke="#b4b8be" stroke-width=".8"/><circle cx="5.3" cy="7.2" r="4" fill="#4a74b8"/><text x="3" y="9.8" font-family="Liberation Sans,sans-serif" font-weight="700" font-size="7.2" fill="#fff">R</text></svg><span style="left:1069.8px;top:904px;font-size:11px;-webkit-text-stroke:.18px;letter-spacing:0.217px;color:#1414b0;">geo_mean.R</span><span style="left:1274.5px;top:904px;font-size:11px;-webkit-text-stroke:.18px;letter-spacing:0.131px;color:#111;">386 B</span><div style="left:1351px;top:901px;width:69px;height:16px;overflow:hidden"><span style="left:3.4px;top:3px;font-size:11px;-webkit-text-stroke:.18px;letter-spacing:0.255px;color:#111;">Jan 7, 2026,</span></div><i class="cb" style="left:1022.1px;top:924.4px"></i><svg style="left:1046.8px;top:921.3px" width="16" height="17" viewBox="0 0 16 17"><path d="M2.2 1.6 H11.3 L14.6 4.9 V15.4 H2.2Z" fill="#fff" stroke="#b4b8be" stroke-width=".8"/><path d="M11.3 1.6V4.9H14.6" fill="#f1f2f4" stroke="#b4b8be" stroke-width=".8"/><circle cx="5.3" cy="7.2" r="4" fill="#4a74b8"/><text x="3" y="9.8" font-family="Liberation Sans,sans-serif" font-weight="700" font-size="7.2" fill="#fff">R</text></svg><span style="left:1069.8px;top:927px;font-size:11px;-webkit-text-stroke:.18px;letter-spacing:0.312px;color:#1414b0;">shiny_upload_textfile.R</span><span style="left:1274.5px;top:927px;font-size:11px;-webkit-text-stroke:.18px;letter-spacing:0.131px;color:#111;">297 B</span><div style="left:1351px;top:924px;width:69px;height:16px;overflow:hidden"><span style="left:3.4px;top:3px;font-size:11px;-webkit-text-stroke:.18px;letter-spacing:0.255px;color:#111;">Jan 7, 2026,</span></div>
</div></div>

<!-- ANNOTATION -->
<svg style="left:0;top:0" width="1487" height="1190" viewBox="0 0 1487 1190">
<g stroke="#c23ff0" stroke-width="2" fill="none" stroke-linecap="round"><path d="M363.5 382.5 L99 342.2"/><path d="M363.5 382.5 L109 599.7"/></g>
<path d="M92.3 341 L101.6 336.3 L100 347Z" fill="#c23ff0"/><path d="M104 604 L106.2 594.6 L115 601.4Z" fill="#c23ff0"/>
<g font-family="Liberation Sans,sans-serif" font-size="19.6" fill="#cc4bf2"><text x="366" y="368" textLength="534">New breakpoints are set in each function, at lines 11 and 27.</text><text x="366" y="391" textLength="563">- They are inactive (only present in the editor) until the functions</text><text x="366" y="414" textLength="430">are sourced so are indicated by open red circles.</text></g>
</svg>
</body></html>
